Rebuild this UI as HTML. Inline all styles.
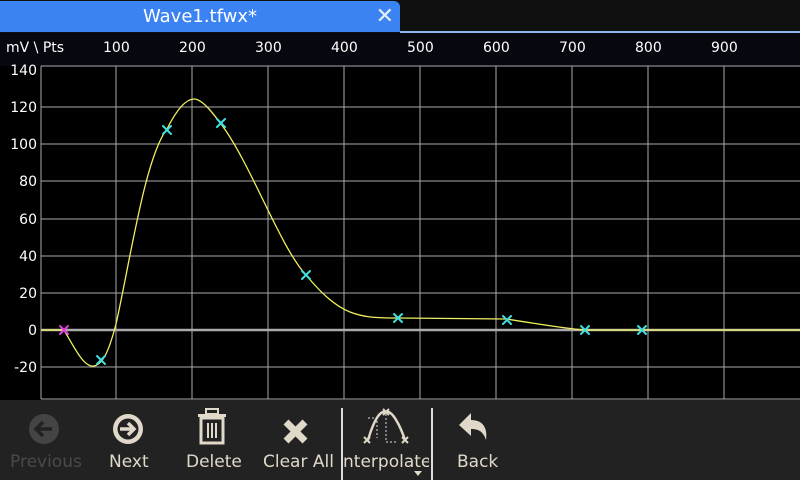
<!DOCTYPE html>
<html><head><meta charset="utf-8"><style>
body{margin:0;width:800px;height:480px;overflow:hidden;background:#000;font-family:"DejaVu Sans","Liberation Sans",sans-serif;position:relative}
.top{position:absolute;left:0;top:0;width:800px;height:33px;background:#101010}
.tab{position:absolute;left:0;top:1px;width:400px;height:31px;background:#3b82f2;border-radius:0 6px 0 0;color:#fff;font-size:18px;line-height:31px;text-align:center}
.tabline{position:absolute;left:400px;top:31px;width:400px;height:2px;background:#8ab8f0}
.x{position:absolute;right:6px;top:0;font-size:22px;color:#e8eef8}
.hdr{position:absolute;left:0;top:33px;width:800px;height:33px;background:#07070f}
.lab{position:absolute;color:#fff;font-size:14px}
.tb{position:absolute;left:0;top:400px;width:800px;height:80px;background:#222222}
.btn{position:absolute;top:462px;font-size:17px;color:#e0d8c8;transform:translateY(-50%)}
</style></head><body>
<div class="top"></div>
<div class="tab">Wave1.tfwx*<span class="x">✕</span></div>
<div class="tabline"></div>
<div class="hdr"></div>
<div class="lab" style="left:6px;top:40px">mV \ Pts</div>
<div class="lab" style="left:103px;top:40px">100</div>
<div class="lab" style="left:179px;top:40px">200</div>
<div class="lab" style="left:255px;top:40px">300</div>
<div class="lab" style="left:331px;top:40px">400</div>
<div class="lab" style="left:407px;top:40px">500</div>
<div class="lab" style="left:483px;top:40px">600</div>
<div class="lab" style="left:559px;top:40px">700</div>
<div class="lab" style="left:635px;top:40px">800</div>
<div class="lab" style="left:711px;top:40px">900</div>
<svg style="position:absolute;left:0;top:62px" width="800" height="340">
<g fill="#fff" font-size="14" font-family="DejaVu Sans,sans-serif" text-anchor="end">
<text x="37" y="13">140</text><text x="37" y="50">120</text><text x="37" y="87">100</text><text x="37" y="124">80</text><text x="37" y="162">60</text><text x="37" y="199">40</text><text x="37" y="236">20</text><text x="37" y="273">0</text><text x="37" y="310">-20</text>
</g>
<g stroke="#aaa" stroke-width="1">
<line x1="41" y1="4" x2="800" y2="4"/>
<line x1="41" y1="4" x2="41" y2="337"/>
<line x1="41" y1="337" x2="800" y2="337"/>
<line x1="116" y1="4" x2="116" y2="337"/><line x1="192" y1="4" x2="192" y2="337"/><line x1="268" y1="4" x2="268" y2="337"/><line x1="344" y1="4" x2="344" y2="337"/><line x1="420" y1="4" x2="420" y2="337"/><line x1="496" y1="4" x2="496" y2="337"/><line x1="572" y1="4" x2="572" y2="337"/><line x1="648" y1="4" x2="648" y2="337"/><line x1="724" y1="4" x2="724" y2="337"/>
<line x1="41" y1="45" x2="800" y2="45"/><line x1="41" y1="82" x2="800" y2="82"/><line x1="41" y1="119" x2="800" y2="119"/><line x1="41" y1="157" x2="800" y2="157"/><line x1="41" y1="194" x2="800" y2="194"/><line x1="41" y1="231" x2="800" y2="231"/><line x1="41" y1="305" x2="800" y2="305"/>
</g>
<line x1="41" y1="268" x2="800" y2="268" stroke="#aaa" stroke-width="2.5"/>
<path d="M41 268 L64 268 C74 285 84 306 94 304 C104 302 110 285 116 262 C130 200 145 95 167 67 C177 47 186 37 194 37 C202 37 212 50 221 62 C250 100 280 185 306 213 C322 232 335 244 350 250 C365 256 380 256 398 256 L506 257 C540 262 560 266 585 268 L800 268" fill="none" stroke="#f0f060" stroke-width="1.3"/>
<g stroke-width="2" stroke-linecap="round">
<path d="M60 264l8 8M68 264l-8 8" stroke="#e040e0"/>
<g stroke="#40e0e0">
<path d="M97 294l8 8M105 294l-8 8"/>
<path d="M163 64l8 8M171 64l-8 8"/>
<path d="M217 57l8 8M225 57l-8 8"/>
<path d="M302 209l8 8M310 209l-8 8"/>
<path d="M394 252l8 8M402 252l-8 8"/>
<path d="M503 254l8 8M511 254l-8 8"/>
<path d="M581 264l8 8M589 264l-8 8"/>
<path d="M638 264l8 8M646 264l-8 8"/>
</g></g>
</svg>
<div class="tb"></div>
<svg style="position:absolute;left:0;top:400px" width="800" height="80">
<circle cx="44" cy="29" r="15" fill="#444"/><path d="M52 29H37M43 22l-7 7 7 7" stroke="#222" stroke-width="3.5" fill="none"/>
<circle cx="128" cy="29" r="15" fill="#e0d8c8"/><circle cx="128" cy="29" r="10.5" fill="#222"/><path d="M120 29h12M128 23l6 6-6 6" stroke="#e0d8c8" stroke-width="3.5" fill="none"/>
<rect x="198" y="14" width="28" height="3" fill="#e0d8c8"/><rect x="206" y="9" width="12" height="5" fill="none" stroke="#e0d8c8" stroke-width="2"/>
<path d="M201 18h22v25h-22z" fill="none" stroke="#e0d8c8" stroke-width="3"/><path d="M208 23v15M212 23v15M216 23v15" stroke="#e0d8c8" stroke-width="2"/>
<path d="M286 22l19 19M305 22l-19 19" stroke="#e0d8c8" stroke-width="7"/>
<line x1="342" y1="8" x2="342" y2="80" stroke="#ddd" stroke-width="2"/>
<line x1="432" y1="8" x2="432" y2="80" stroke="#ddd" stroke-width="2"/>
<path d="M368 40C374 20 380 10 386 12C392 10 400 25 405 40" fill="none" stroke="#e0d8c8" stroke-width="2.5"/>
<path d="M368 18h9v20M386 14v28h12" fill="none" stroke="#ddd" stroke-dasharray="2 2"/>
<path d="M364 37l6 6M370 37l-6 6M383 9l6 6M389 9l-6 6M402 37l6 6M408 37l-6 6" stroke="#e0d8c8" stroke-width="2"/>
<path d="M414 71h8l-4 5z" fill="#e0d8c8"/>
<path d="M459 25l12-12v7c11 0 17 7 15 20c-3-9-8-11-15-11v7z" fill="#e0d8c8"/>
</svg>
<div class="btn" style="left:10px;color:#4a4a4a">Previous</div>
<div class="btn" style="left:109px">Next</div>
<div class="btn" style="left:186px">Delete</div>
<div class="btn" style="left:263px">Clear All</div>
<div class="btn" style="left:341px;width:88px;overflow:hidden;white-space:nowrap;text-indent:-3px">Interpolate</div>
<div class="btn" style="left:457px">Back</div>
</body></html>
